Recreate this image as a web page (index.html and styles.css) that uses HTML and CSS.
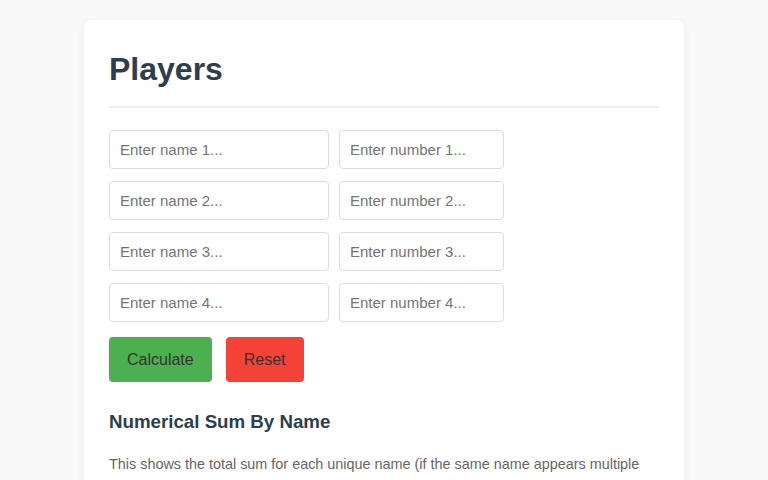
FILE: index.html
```html
<!DOCTYPE html>
<html lang="en">
<head>
    <meta charset="UTF-8">
    <meta name="viewport" content="width=device-width, initial-scale=1.0">
    <title>Players</title>
    <link rel="stylesheet" href="styles.css">
</head>
<body>
    <div class="container">
        <h1>Players</h1>

        <div class="player-list">
            <div class="player-row">
                <input type="text" class="name-input" placeholder="Enter name 1...">
                <input type="number" class="number-input" placeholder="Enter number 1...">
            </div>
            <div class="player-row">
                <input type="text" class="name-input" placeholder="Enter name 2...">
                <input type="number" class="number-input" placeholder="Enter number 2...">
            </div>
            <div class="player-row">
                <input type="text" class="name-input" placeholder="Enter name 3...">
                <input type="number" class="number-input" placeholder="Enter number 3...">
            </div>
            <div class="player-row">
                <input type="text" class="name-input" placeholder="Enter name 4...">
                <input type="number" class="number-input" placeholder="Enter number 4...">
            </div>
        </div>

        <div class="button-group">
            <button class="btn btn-calc">Calculate</button>
            <button class="btn btn-reset">Reset</button>
        </div>

        <h3>Numerical Sum By Name</h3>
        <p class="description">This shows the total sum for each unique name (if the same name appears multiple times, their numbers are added together).</p>
    </div>
</body>
</html>
```

FILE: styles.css
```css
* {
    box-sizing: border-box;
    margin: 0;
    padding: 0;
}

body {
    font-family: "Liberation Sans", Arial, sans-serif;
    background-color: #f9f9f9;
    padding: 20px;
}

.container {
    width: 600px;
    margin: 0 auto;
    background-color: white;
    padding: 31px 25px 30px;
    border-radius: 8px;
    box-shadow: 0 2px 10px rgba(0,0,0,0.06);
}

h1 {
    font-size: 32px;
    color: #2c3e50;
    padding-bottom: 18px;
    border-bottom: 2px solid #eee;
    margin-bottom: 22px;
}

.player-list {
    display: flex;
    flex-direction: column;
    gap: 12px;
}

.player-row {
    display: flex;
    gap: 10px;
}

input {
    font-family: inherit;
    font-size: 15px;
    line-height: 17px;
    padding: 10px;
    border: 1px solid #ddd;
    border-radius: 4px;
    color: #333;
}

input::placeholder {
    color: #757575;
}

.name-input {
    width: 220px;
}

.number-input {
    width: 165px;
}

.button-group {
    display: flex;
    gap: 14px;
    margin-top: 15px;
}

.btn {
    font-family: inherit;
    font-size: 16px;
    line-height: 19px;
    padding: 13px 18px;
    border: none;
    border-radius: 4px;
    color: #333;
    cursor: pointer;
}

.btn-calc {
    background-color: #4caf50;
}

.btn-reset {
    background-color: #f44336;
}

h3 {
    font-size: 18.72px;
    color: #2c3e50;
    margin-top: 29px;
    margin-bottom: 20px;
}

.description {
    font-size: 14.4px;
    color: #666;
    line-height: 1.6;
}
```
